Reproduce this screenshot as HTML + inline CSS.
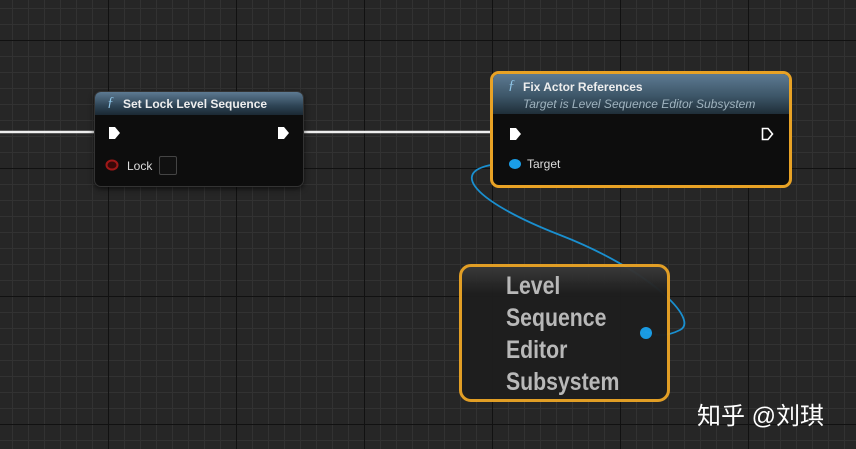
<!DOCTYPE html><html><head><style>
body{margin:0;width:856px;height:449px;overflow:hidden;background:#262626;position:relative;font-family:"Liberation Sans",sans-serif}
.grid{position:absolute;inset:0;
background-image:
linear-gradient(90deg,#111 1px,transparent 1px),
linear-gradient(0deg,#111 1px,transparent 1px),
linear-gradient(90deg,#323232 1px,transparent 1px),
linear-gradient(0deg,#323232 1px,transparent 1px);
background-size:128px 128px,128px 128px,16px 16px,16px 16px;
background-position:108px 41px,108px 41px,12px 9px,12px 9px}
.node{position:absolute;background:#0d0d0d;border-radius:7px;box-shadow:0 2px 6px rgba(0,0,0,.6)}
.hdr{position:absolute;left:0;right:0;top:0;border-radius:6px 6px 0 0;background:linear-gradient(180deg,#5d7a92,#2e4455 60%,#1b2833)}
.t{position:absolute;color:#eee;font-weight:bold;font-size:12px;white-space:nowrap}
.f{position:absolute;color:#8fc6e8;font-style:italic;font-family:"Liberation Serif",serif;font-size:14px}
.lbl{position:absolute;color:#ddd;font-size:12px}
</style></head><body>
<div class="grid"></div>
<svg style="position:absolute;left:0;top:0" width="856" height="449">
<line x1="0" y1="132" x2="110" y2="132" stroke="#eee" stroke-width="2.5"/>
<line x1="290" y1="132" x2="508" y2="132" stroke="#eee" stroke-width="2.5"/>
<path d="M512 163 C 440 165, 470 200, 560 235 S 700 320, 680 330 S 650 332, 645 332" fill="none" stroke="#1a8fcf" stroke-width="1.8"/>
</svg>
<div class="node" style="left:94px;top:91px;width:208px;height:94px;border:1px solid #333">
<div class="hdr" style="height:23px"></div>
<span class="f" style="left:12px;top:3px">ƒ</span>
<span class="t" style="left:28px;top:5px">Set Lock Level Sequence</span>
<svg style="position:absolute;left:13px;top:34px" width="14" height="14"><path d="M1 1H7L12 7L7 13H1Z" fill="#fff"/></svg>
<svg style="position:absolute;left:182px;top:34px" width="14" height="14"><path d="M1 1H7L12 7L7 13H1Z" fill="#fff"/></svg>
<svg style="position:absolute;left:10px;top:67px" width="16" height="12"><ellipse cx="7" cy="6" rx="5.5" ry="4.5" fill="#3a0808" stroke="#a01818" stroke-width="2"/></svg>
<span class="lbl" style="left:32px;top:67px">Lock</span>
<div style="position:absolute;left:64px;top:64px;width:16px;height:17px;border:1px solid #444;border-radius:2px;background:#111"></div>
</div>
<div style="position:absolute;left:490px;top:71px;width:296px;height:111px;border:3px solid #e8a225;border-radius:9px;background:#0d0d0d">
<div class="hdr" style="height:40px;background:linear-gradient(180deg,#5d7a92,#3d5668 55%,#1f2e38)"></div>
<span class="f" style="left:15px;top:4px">ƒ</span>
<span class="t" style="left:30px;top:6px">Fix Actor References</span>
<span style="position:absolute;left:30px;top:23px;color:#9fb3bf;font-style:italic;font-size:12px;white-space:nowrap">Target is Level Sequence Editor Subsystem</span>
<svg style="position:absolute;left:16px;top:53px" width="14" height="14"><path d="M1 1H7L12 7L7 13H1Z" fill="#fff"/></svg>
<svg style="position:absolute;left:268px;top:53px" width="14" height="14"><path d="M1.5 1.5H7L11.5 7L7 12.5H1.5Z" fill="none" stroke="#fff" stroke-width="1.6"/></svg>
<svg style="position:absolute;left:15px;top:84px" width="16" height="12"><ellipse cx="7" cy="6" rx="6" ry="5" fill="#1a9ee8"/></svg>
<span class="lbl" style="left:34px;top:83px">Target</span>
</div>
<div style="position:absolute;left:459px;top:264px;width:205px;height:132px;border:3px solid #e8a225;border-radius:12px;background:linear-gradient(180deg,#3a3a3a,#1e1e1e 20%,#1e1e1e);opacity:.97">
<div style="position:absolute;left:44px;top:3px;color:#bdbdbd;font-weight:bold;font-size:25px;line-height:32px;transform:scaleX(0.85);transform-origin:left top;white-space:nowrap">Level<br>Sequence<br>Editor<br>Subsystem</div>
<div style="position:absolute;left:178px;top:60px;width:12px;height:12px;border-radius:50%;background:#1a9ee8"></div>
</div>
<div style="position:absolute;left:697px;top:396px;color:#fff;font-size:24px;font-family:'Liberation Sans','Noto Sans CJK SC',sans-serif">知乎 @刘琪</div>
</body></html>
